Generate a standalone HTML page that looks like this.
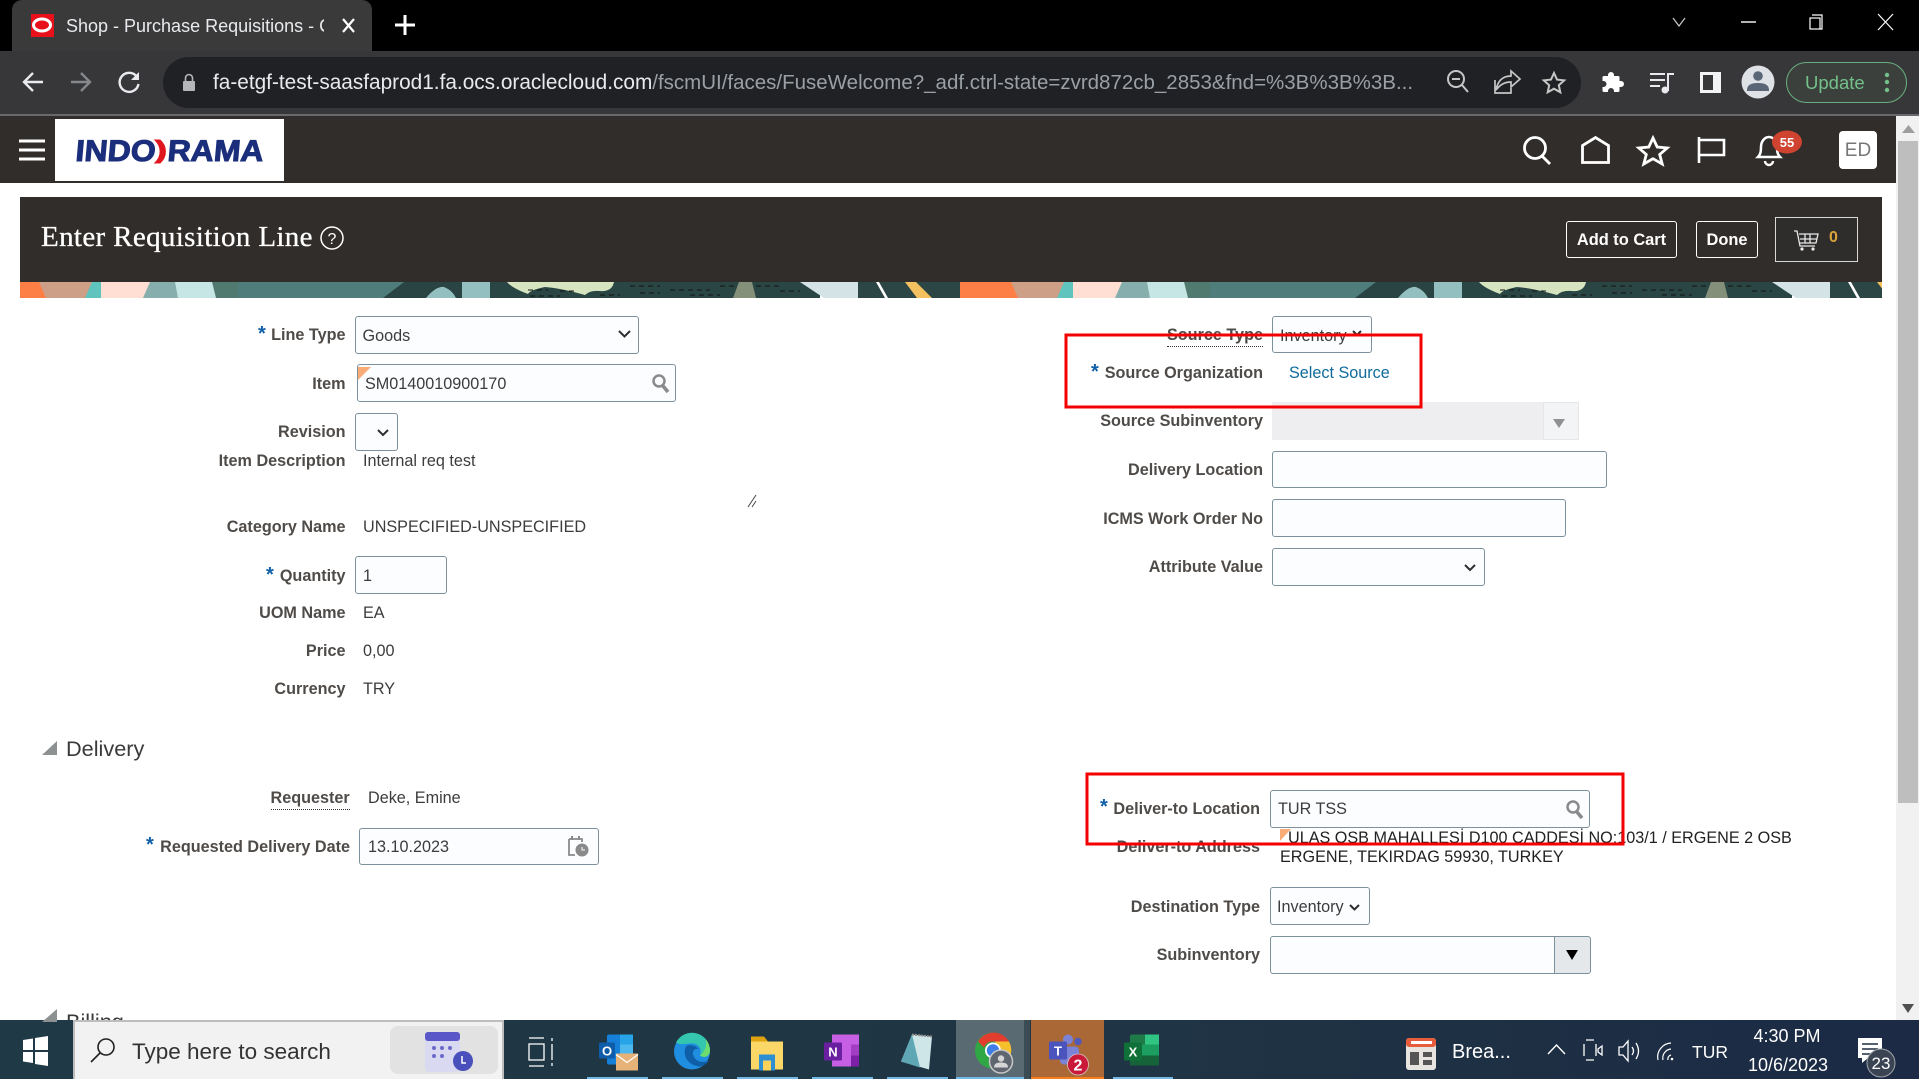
<!DOCTYPE html>
<html><head><meta charset="utf-8"><title>Shop - Purchase Requisitions</title>
<style>
html,body{margin:0;padding:0;width:1919px;height:1079px;overflow:hidden;background:#fff;font-family:"Liberation Sans",Arial,sans-serif}
.a{position:absolute;white-space:nowrap}
.l{position:absolute;white-space:nowrap;font-weight:bold;font-size:16.2px;line-height:20px;color:#4f4b48;text-align:right;margin-top:1px}
.v{position:absolute;white-space:nowrap;font-size:16.2px;line-height:20px;color:#3c3c3c;margin-top:1px}
.s{position:absolute;color:#0f5fa8;font-weight:bold;font-size:20px;line-height:20px;margin-top:-1px}
.b{position:absolute;box-sizing:border-box;border:1px solid #7d919c;border-radius:3px;background:#fbfdff}
.d{border-bottom:1px dotted #333;padding-bottom:1px}
svg{position:absolute;left:0;top:0}
</style></head><body>

<!-- chrome -->
<div class="a" style="left:0;top:0;width:1919px;height:51px;background:#000"></div>
<div class="a" style="left:12px;top:0;width:360px;height:51px;background:#3a3a3b;border-radius:10px 10px 0 0"></div>
<div class="a" style="left:0;top:51px;width:1919px;height:63px;background:#37373a"></div>
<div class="a" style="left:0;top:114px;width:1919px;height:2px;background:#67696c"></div>
<div class="a" style="left:163px;top:57px;width:1418px;height:51px;background:#202124;border-radius:26px"></div>
<div class="a" style="left:66px;top:14px;width:258px;height:24px;line-height:24px;font-size:18px;color:#e8eaed;overflow:hidden">Shop - Purchase Requisitions - C</div>
<div class="a" style="left:213px;top:69px;height:28px;line-height:28px;font-size:20.8px;color:#e8eaed;transform-origin:0 50%">fa-etgf-test-saasfaprod1.fa.ocs.oraclecloud.com<span style="color:#9aa0a6;font-size:20.5px">/fscmUI/faces/FuseWelcome?_adf.ctrl-state=zvrd872cb_2853&amp;fnd=%3B%3B%3B...</span></div>
<div class="a" style="left:1786px;top:62px;width:121px;height:41px;box-sizing:border-box;border:1.5px solid #6aae7e;border-radius:21px;background:#3b403d"></div>
<div class="a" style="left:1805px;top:71px;line-height:24px;font-size:18.5px;color:#74c08a">Update</div>

<!-- oracle header -->
<div class="a" style="left:0;top:116px;width:1896px;height:67px;background:#312d2a"></div>
<div class="a" style="left:55px;top:119px;width:229px;height:62px;background:#fff"></div>
<div class="a" style="left:20px;top:197px;width:1862px;height:85px;background:#312d2a"></div>
<div class="a" style="left:41px;top:220px;font-family:'Liberation Serif',serif;font-size:29px;letter-spacing:.35px;-webkit-text-stroke:.3px #fff;line-height:34px;color:#fff">Enter Requisition Line</div>
<div class="a" style="left:1566px;top:221px;width:111px;height:37px;box-sizing:border-box;border:1px solid #fff;border-radius:3px;color:#fff;font-weight:bold;font-size:16.4px;line-height:36px;text-align:center">Add to Cart</div>
<div class="a" style="left:1696px;top:221px;width:62px;height:37px;box-sizing:border-box;border:1px solid #fff;border-radius:3px;color:#fff;font-weight:bold;font-size:16.4px;line-height:36px;text-align:center">Done</div>
<div class="a" style="left:1775px;top:217px;width:83px;height:45px;box-sizing:border-box;border:1px solid #d8d8d8;background:#2f2d2c"></div>
<div class="a" style="left:1829px;top:227px;font-size:16px;font-weight:bold;line-height:22px;color:#dca23c">0</div>

<!-- banner -->
<svg width="1919" height="1079" style="z-index:0">
<defs>
<g id="bn">
<rect x="-12" y="0" width="58" height="16" fill="#fe7f45"/>
<polygon points="39,0 101,0 86,16 46,16" fill="#cc9f86"/>
<polygon points="92,0 101,0 101,16 85,16" fill="#5fc4bd"/>
<polygon points="101,0 150,0 144,16 101,16" fill="#ffdfd3"/>
<polygon points="150,0 176,0 178,16 143,16" fill="#85aeac"/>
<polygon points="175,0 212,0 216,16 178,16" fill="#c6e5e5"/>
<polygon points="212,0 238,0 250,16 216,16" fill="#507a6f"/>
<rect x="238" y="0" width="170" height="16" fill="#4f7d7b"/>
<polygon points="383,16 404,0 545,0 545,16" fill="#294442"/>
<path d="M426 16Q436 4 444 5Q452 8 456 16Z" fill="#93bfc0"/>
<rect x="462" y="0" width="28" height="16" fill="#93bfc0"/>
<rect x="490" y="0" width="330" height="16" fill="#2a4644"/>
<path d="M507 0H614Q612 10 600 9Q590 8 585 13Q560 6 545 5Q530 8 528 12Q512 6 507 0Z" fill="#d6e5c0"/>
<path d="M528 8h20M560 9h16M630 4h30M670 8h40M640 11h20M690 13h30M530 14h30M600 13h20M720 4h60M780 9h20" stroke="#111" stroke-width="1" stroke-dasharray="5 4"/>
<polygon points="739,0 752,0 756,16 733,16" fill="#84907a"/>
<polygon points="800,0 858,0 858,16 824,16" fill="#d3e3e6"/>
<rect x="858" y="0" width="112" height="16" fill="#2b4644"/>
<polygon points="876,0 879,0 888,16 885,16" fill="#fff"/>
<polygon points="905,0 916,0 932,16 917,16" fill="#f4c160"/>
</g>
<clipPath id="bc"><rect x="20" y="282" width="1862" height="16"/></clipPath>
</defs>
<g clip-path="url(#bc)">
<use href="#bn" x="0" y="282"/><use href="#bn" x="972" y="282"/><use href="#bn" x="1944" y="282"/>
</g>
</svg>

<!-- left form -->
<div class="s" style="left:258px;top:325px">*</div>
<div class="l" style="left:0;width:345.5px;top:324px">Line Type</div>
<div class="b" style="left:355px;top:316px;width:284px;height:38px"></div>
<div class="v" style="left:362.500px;top:325px">Goods</div>
<div class="l" style="left:0;width:345.5px;top:373px">Item</div>
<div class="b" style="left:357px;top:364px;width:319px;height:38px"></div>
<div class="v" style="left:365px;top:373px">SM0140010900170</div>
<div class="l" style="left:0;width:345.5px;top:421px">Revision</div>
<div class="b" style="left:355px;top:413px;width:43px;height:38px"></div>
<div class="l" style="left:0;width:345.5px;top:450px">Item Description</div>
<div class="v" style="left:363px;top:450px">Internal req test</div>
<div class="l" style="left:0;width:345.5px;top:516px">Category Name</div>
<div class="v" style="left:363px;top:516px">UNSPECIFIED-UNSPECIFIED</div>
<div class="s" style="left:266px;top:566px">*</div>
<div class="l" style="left:0;width:345.5px;top:565px">Quantity</div>
<div class="b" style="left:355px;top:556px;width:92px;height:38px"></div>
<div class="v" style="left:363px;top:565px">1</div>
<div class="l" style="left:0;width:345.5px;top:602px">UOM Name</div>
<div class="v" style="left:363px;top:602px">EA</div>
<div class="l" style="left:0;width:345.5px;top:640px">Price</div>
<div class="v" style="left:363px;top:640px">0,00</div>
<div class="l" style="left:0;width:345.5px;top:678px">Currency</div>
<div class="v" style="left:363px;top:678px">TRY</div>

<div class="a" style="left:66px;top:736px;font-size:21.7px;line-height:26px;color:#3a3a3a">Delivery</div>
<div class="l d" style="left:270.500px;top:787px">Requester</div>
<div class="v" style="left:368px;top:787px">Deke, Emine</div>
<div class="s" style="left:146px;top:836px">*</div>
<div class="l" style="left:0;width:350px;top:836px">Requested Delivery Date</div>
<div class="b" style="left:359px;top:828px;width:240px;height:37px"></div>
<div class="v" style="left:368px;top:836px">13.10.2023</div>
<div class="a" style="left:66px;top:1009px;font-size:21.7px;line-height:26px;color:#3a3a3a">Billing</div>

<!-- right form -->
<div class="l d" style="left:1167px;top:324px">Source Type</div>
<div class="b" style="left:1272px;top:316px;width:100px;height:37px"></div>
<div class="v" style="left:1280px;top:325px">Inventory</div>
<div class="s" style="left:1091px;top:363px">*</div>
<div class="l" style="left:1000px;width:263px;top:362px">Source Organization</div>
<div class="v" style="left:1289px;top:362px;color:#0f6b9c">Select Source</div>
<div class="l" style="left:1000px;width:263px;top:410px">Source Subinventory</div>
<div class="a" style="left:1272px;top:402px;width:271px;height:38px;background:#eeeef0"></div>
<div class="a" style="left:1543px;top:402px;width:36px;height:38px;box-sizing:border-box;background:#f3f4f5;border:1px solid #e4e6e8"></div>
<div class="l" style="left:1000px;width:263px;top:459px">Delivery Location</div>
<div class="b" style="left:1272px;top:451px;width:335px;height:37px"></div>
<div class="l" style="left:1000px;width:263px;top:508px">ICMS Work Order No</div>
<div class="b" style="left:1272px;top:499px;width:294px;height:38px"></div>
<div class="l" style="left:1000px;width:263px;top:556px">Attribute Value</div>
<div class="b" style="left:1272px;top:548px;width:213px;height:38px"></div>

<div class="s" style="left:1100px;top:798px">*</div>
<div class="l" style="left:1000px;width:260px;top:798px">Deliver-to Location</div>
<div class="b" style="left:1270px;top:790px;width:320px;height:38px"></div>
<div class="v" style="left:1278px;top:798px">TUR TSS</div>
<div class="l" style="left:1000px;width:260px;top:836px">Deliver-to Address</div>
<div class="v" style="left:1288px;top:827px;color:#222">ULAS OSB MAHALLESİ D100 CADDESİ NO:103/1 / ERGENE 2 OSB</div>
<div class="v" style="left:1280px;top:846px;color:#222">ERGENE, TEKIRDAG 59930, TURKEY</div>
<div class="l" style="left:1000px;width:260px;top:896px">Destination Type</div>
<div class="b" style="left:1270px;top:887px;width:100px;height:38px"></div>
<div class="v" style="left:1277px;top:896px">Inventory</div>
<div class="l" style="left:1000px;width:260px;top:944px">Subinventory</div>
<div class="b" style="left:1270px;top:936px;width:285px;height:38px;border-radius:3px 0 0 3px"></div>
<div class="a" style="left:1554px;top:936px;width:37px;height:38px;box-sizing:border-box;background:#e4e8ea;border:1px solid #7d919c;border-radius:0 3px 3px 0"></div>

<!-- scrollbar -->
<div class="a" style="left:1896px;top:116px;width:23px;height:904px;background:#f1f1f1"></div>
<div class="a" style="left:1898px;top:141px;width:20px;height:662px;background:#bebebe"></div>

<!-- taskbar -->
<div class="a" style="left:0;top:1020px;width:1919px;height:59px;background:linear-gradient(90deg,#1f3a46,#1f3444 60%,#1c2a45)"></div>
<div class="a" style="left:73px;top:1020px;width:431px;height:59px;box-sizing:border-box;background:#f2f2f2;border:2px solid #bdbdbd;border-bottom:none"></div>
<div class="a" style="left:390px;top:1026px;width:108px;height:48px;background:#e2e2e2;border-radius:8px"></div>
<div class="a" style="left:132px;top:1038px;font-size:22.5px;line-height:28px;color:#333">Type here to search</div>
<div class="a" style="left:956px;top:1020px;width:68px;height:59px;background:#5a6a72"></div>
<div class="a" style="left:1024px;top:1020px;width:6px;height:59px;background:#3b4c55"></div>
<div class="a" style="left:1031px;top:1020px;width:73px;height:59px;background:#a96836"></div>
<div class="a" style="left:1452px;top:1038px;font-size:20px;line-height:28px;color:#fff">Brea...</div>
<div class="a" style="left:1692px;top:1038px;font-size:17.5px;line-height:28px;color:#fff">TUR</div>
<div class="a" style="left:1737px;top:1023px;width:100px;text-align:center;font-size:18px;line-height:26px;color:#fff">4:30 PM</div>
<div class="a" style="left:1737px;top:1052px;width:102px;text-align:center;font-size:18px;line-height:26px;color:#fff">10/6/2023</div>

<svg width="1919" height="1079" style="z-index:5">
<!-- tab -->
<rect x="31" y="14" width="23" height="23" fill="#e8101a"/><ellipse cx="42" cy="25" rx="8.5" ry="6" fill="none" stroke="#fff" stroke-width="3"/>
<path d="M343 19l11 13M354 19l-11 13" stroke="#fff" stroke-width="2.2"/>
<path d="M405 15v20M395 25h20" stroke="#fff" stroke-width="3"/>
<!-- window controls -->
<path d="M1673 18l6 8 6-8" fill="none" stroke="#ccc" stroke-width="1.2"/>
<path d="M1741 22h15" stroke="#fff" stroke-width="1.4"/>
<path d="M1812 15h10v14h-2" fill="none" stroke="#fff" stroke-width="1.2"/><rect x="1810" y="18" width="10" height="11" fill="#000" stroke="#fff" stroke-width="1.2"/>
<path d="M1878 14l15 16M1893 14l-15 16" stroke="#fff" stroke-width="1.2"/>
<!-- nav -->
<path d="M43 82H25M33 73l-9 9 9 9" fill="none" stroke="#e8eaed" stroke-width="2.4"/>
<path d="M72 82H90M82 73l9 9-9 9" fill="none" stroke="#85878a" stroke-width="2.4" transform="translate(-1 0)"/>
<path d="M137 77a9.5 9.5 0 1 0 1.5 7" fill="none" stroke="#e8eaed" stroke-width="2.4"/><path d="M139 72v8h-8z" fill="#e8eaed"/>
<rect x="183" y="81" width="12" height="10" rx="1" fill="#b4b6b9"/><path d="M185.5 81v-3a3.5 3.5 0 0 1 7 0v3" fill="none" stroke="#b4b6b9" stroke-width="1.6"/>
<!-- omnibox icons -->
<circle cx="1456" cy="79" r="8" fill="none" stroke="#c4c7c5" stroke-width="2"/><path d="M1452 79h8M1462 85l6 7" stroke="#c4c7c5" stroke-width="2"/>
<path d="M1495 80v13h16v-5M1496 90c2-10 7-14 15-14v-5l9 8-9 8v-5c-7 0-11 3-15 8z" fill="none" stroke="#c4c7c5" stroke-width="1.7"/>
<path d="M1554 73l3 6.6 7.2.8-5.4 4.8 1.5 7.1-6.3-3.6-6.3 3.6 1.5-7.1-5.4-4.8 7.200-.8z" fill="none" stroke="#c4c7c5" stroke-width="2"/>
<path d="M1604 76h4v-1a3 3 0 0 1 6 0v1h4a1.500 1.500 0 0 1 1.500 1.500v3.500h1.500a3 3 0 0 1 0 6h-1.500v3.500a1.500 1.500 0 0 1-1.500 1.500h-4v-1a3 3 0 0 0-6 0v1h-4a1.500 1.500 0 0 1-1.500-1.500v-3.500h1a3 3 0 0 0 0-6h-1v-3.500a1.500 1.500 0 0 1 1.500-1.500z" fill="#fff"/>
<path d="M1650 74h15M1650 80h15M1650 86h10" stroke="#e8eaed" stroke-width="2"/><path d="M1668 91v-17h6" fill="none" stroke="#e8eaed" stroke-width="2"/><circle cx="1665" cy="90" r="3.500" fill="#e8eaed"/>
<rect x="1700" y="72" width="21" height="21" fill="#f1f3f4"/><rect x="1703" y="75" width="10" height="15" fill="#37373a"/>
<circle cx="1758" cy="82" r="16.500" fill="#dee1e6"/><circle cx="1758" cy="76" r="4.800" fill="#5a6577"/><path d="M1747 90c0-5 4-7 11-7s11 2 11 7v1h-22z" fill="#5a6577"/>
<g fill="#74c08a"><circle cx="1887" cy="75" r="2.200"/><circle cx="1887" cy="82" r="2.200"/><circle cx="1887" cy="90" r="2.200"/></g>
<!-- oracle header -->
<path d="M19 141h26M19 150h26M19 159h26" stroke="#fff" stroke-width="3"/>
<text x="75" y="161" font-family="Liberation Sans,sans-serif" font-weight="bold" font-size="30" fill="#1b2e7c" stroke="#1b2e7c" stroke-width="1" textLength="80" lengthAdjust="spacingAndGlyphs" transform="translate(14 0) skewX(-5)">INDO</text>
<text x="155" y="158" font-family="Liberation Sans,sans-serif" font-weight="bold" font-size="25" fill="#e0171f" stroke="#e0171f" stroke-width="1" textLength="12" lengthAdjust="spacingAndGlyphs">)</text>
<text x="167" y="161" font-family="Liberation Sans,sans-serif" font-weight="bold" font-size="30" fill="#1b2e7c" stroke="#1b2e7c" stroke-width="1" textLength="96" lengthAdjust="spacingAndGlyphs" transform="translate(14 0) skewX(-5)">RAMA</text>
<circle cx="1535" cy="148" r="10.500" fill="none" stroke="#fff" stroke-width="2.800"/><path d="M1542 156l8 8" stroke="#fff" stroke-width="2.800"/>
<path d="M1582.500 162.500V145.500L1595.500 137.500 1608.500 145.500V162.500Z" fill="none" stroke="#fff" stroke-width="2.800"/>
<path d="M1653 138l4.200 9 10 1-7.500 6.500 2.500 9.500-9.200-5.300-9.200 5.300 2.500-9.500-7.500-6.500 10-1z" fill="none" stroke="#fff" stroke-width="2.800" stroke-linejoin="miter"/>
<path d="M1699 163v-26M1699 140h25v15h-25" fill="none" stroke="#fff" stroke-width="2.600"/>
<path d="M1758 157c3-3 3-7 3-10 0-6 4-10 8-10s8 4 8 10c0 3 0 7 3 10z" fill="none" stroke="#fff" stroke-width="2.500"/><path d="M1765 161a4 4 0 0 0 8 0" fill="none" stroke="#fff" stroke-width="2.400"/>
<ellipse cx="1787" cy="142" rx="15" ry="11.500" fill="#cf4330"/>
<text x="1787" y="147" text-anchor="middle" font-family="Liberation Sans,sans-serif" font-weight="bold" font-size="13" fill="#fff">55</text>
<rect x="1839" y="131" width="38" height="38" rx="4" fill="#fff"/>
<text x="1858" y="156" text-anchor="middle" font-family="Liberation Sans,sans-serif" font-size="19" fill="#777">ED</text>
<circle cx="332" cy="238" r="11" fill="none" stroke="#fff" stroke-width="1.500"/>
<text x="332" y="244" text-anchor="middle" font-family="Liberation Sans,sans-serif" font-size="16" fill="#fff">?</text>
<!-- cart -->
<path d="M1794 231h3l3 15h15M1799 234h19l-2 9h-16M1805 234v9M1810 234v9M1800 239h17" fill="none" stroke="#e8e8e8" stroke-width="1.300"/><circle cx="1802" cy="249" r="1.600" fill="#eee"/><circle cx="1813" cy="249" r="1.600" fill="#eee"/>
<!-- scrollbar arrows -->
<path d="M1902 133l6.500-8 6.500 8z" fill="#9e9e9e"/><path d="M1902 1004l6 9 6-9z" fill="#505050"/>
<!-- chevrons -->
<g fill="none" stroke="#2e2e2e" stroke-width="2"><path d="M619 331l5.500 5.500 5.500-5.500"/><path d="M378 430l5 5 5-5"/><path d="M1353 331l4 4 4-4"/><path d="M1465 565l5 5 5-5"/><path d="M1350 905l4.500 4.500 4.500-4.500"/></g>
<path d="M1553 419h12l-6 9z" fill="#919191"/>
<path d="M1566 950h12l-6 10z" fill="#000"/>
<!-- magnifiers -->
<g fill="none" stroke="#8a8a8a"><circle cx="659" cy="381" r="5.500" stroke-width="2.500"/><path d="M663 386l5 6" stroke-width="3.600"/><circle cx="1573" cy="807" r="5.500" stroke-width="2.500"/><path d="M1577 812l5 6" stroke-width="3.600"/></g>
<!-- triangles -->
<path d="M358 367h13l-13 13z" fill="#f9ac76"/><path d="M1280 829h11l-11 12z" fill="#f9ac76"/>
<path d="M748 507l8-12M752 507l4-6" stroke="#444" stroke-width="1"/>
<path d="M42 755l15-14v14z" fill="#8d9192"/><path d="M42 1022l15-13v13z" fill="#8d9192"/>
<!-- calendar -->
<path d="M569 839h13v3M569 839v16h6" fill="none" stroke="#8a8a8a" stroke-width="1.800"/><path d="M572 836v4M579 836v4" stroke="#8a8a8a" stroke-width="2"/><circle cx="582" cy="850" r="6.500" fill="#8a8a8a"/><path d="M582 847v3h3" stroke="#fff" stroke-width="1" fill="none"/>
<!-- red rects -->
<g fill="none" stroke="#f40000" stroke-width="3"><rect x="1066" y="335" width="355" height="72"/><rect x="1087" y="774" width="536" height="70"/></g>
<!-- taskbar icons -->
<g transform="translate(-1 -1)"><path d="M24 1041l10-1.500v11.500h-10zM36 1039l13-2v14h-13zM24 1053h10v11l-10-1.500zM36 1053h13v14l-13-2z" fill="#fff"/></g>
<circle cx="106" cy="1047" r="8" fill="none" stroke="#222" stroke-width="1.600"/><path d="M100 1053l-9 9" stroke="#222" stroke-width="1.600"/>
<rect x="425" y="1032" width="35" height="40" rx="4" fill="#d9d9f2"/><rect x="425" y="1032" width="35" height="9" rx="3" fill="#5a57c8"/><g fill="#6d6ac9"><circle cx="434" cy="1048" r="2"/><circle cx="442" cy="1048" r="2"/><circle cx="450" cy="1048" r="2"/><circle cx="434" cy="1056" r="2"/><circle cx="442" cy="1056" r="2"/></g><circle cx="463" cy="1061" r="10" fill="#4a50bb"/><path d="M462 1056v7h4" stroke="#fff" stroke-width="1.500" fill="none"/>
<path d="M529 1038h15M529 1044h15v16h-15zM529 1066h15M552 1038v3M552 1044v16M552 1063v3" fill="none" stroke="#fff" stroke-width="1.300"/>
<g transform="translate(0 -1.500)">
<!-- outlook -->
<rect x="607" y="1036" width="26" height="30" rx="2" fill="#1680d8"/><rect x="620" y="1036" width="13" height="10" fill="#27a3e8"/><rect x="620" y="1046" width="13" height="10" fill="#4db8ee"/><rect x="599" y="1044" width="16" height="16" rx="1.500" fill="#0f5cab"/><text x="607" y="1057" text-anchor="middle" font-family="Liberation Sans,sans-serif" font-weight="bold" font-size="13" fill="#fff">O</text><rect x="616" y="1055" width="22" height="17" fill="#e6b277"/><path d="M616 1056l11 8 11-8" fill="none" stroke="#fff" stroke-width="1.300"/>
<!-- edge -->
<circle cx="692" cy="1053" r="18" fill="#1f8ee0"/><path d="M676 1044a18 18 0 0 1 34 8c0 6-6 8-10 5 3-9-4-13-10-12-6 0-10 2-14-1z" fill="#35c6b0"/><path d="M710 1052a18 18 0 0 0-5-12c3 6 0 13-5 17 4 3 10 1 10-5z" fill="#6fdc6e"/><path d="M686 1048c-4 8 1 19 14 20 4-1 7-3 9-6-7 3-14 1-16-6-1-5 4-7 6-5-3-4-10-6-13-3z" fill="#0f5fa8"/>
<!-- folder -->
<path d="M751 1040h12l2 3h18v28h-32z" fill="#fbd768"/><path d="M751 1038h13l4 5h-17z" fill="#dea30e"/><rect x="759" y="1056" width="16" height="16" fill="#2e8fd3"/><rect x="763" y="1062" width="8" height="10" fill="#fbd25a"/>
<!-- onenote -->
<rect x="832" y="1036" width="27" height="32" fill="#c65fe3"/><rect x="851" y="1046" width="8" height="11" fill="#a23dc4"/><rect x="851" y="1057" width="8" height="11" fill="#7e1fa8"/><rect x="824" y="1044" width="18" height="18" rx="1.500" fill="#6a1fa0"/><text x="833" y="1058" text-anchor="middle" font-family="Liberation Sans,sans-serif" font-weight="bold" font-size="13" fill="#fff">N</text>
<!-- notepad -->
<path d="M912 1036l20 2-3 33-28-8z" fill="#cfe6e8"/><path d="M912 1036l8 33-19-6z" fill="#5fa7b4"/><path d="M912 1036l20 2" stroke="#888" stroke-width="2" stroke-dasharray="2 1"/>
<!-- chrome -->
<circle cx="993" cy="1052" r="18" fill="#2fa745"/><path d="M978 1043a18 18 0 0 1 31 0h-16a9 9 0 0 0-9 6z" fill="#e23d2f"/><path d="M1009 1043a18 18 0 0 1-8 25l-8-13a9 9 0 0 0 2-12z" fill="#f6c02c"/><circle cx="993" cy="1052" r="8" fill="#fff"/><circle cx="993" cy="1052" r="6.200" fill="#3d7fe6"/>
<circle cx="1001" cy="1063" r="11.500" fill="#5f6670" stroke="#c8c8c8" stroke-width="1.500"/><circle cx="1001" cy="1060" r="3.200" fill="#d5d5d5"/><path d="M994 1069c0-4 3-5 7-5s7 1 7 5z" fill="#d5d5d5"/>
<!-- teams -->
<circle cx="1068" cy="1041" r="5" fill="#7b83d6"/><circle cx="1078" cy="1043" r="3.800" fill="#5059b8"/><rect x="1060" y="1048" width="19" height="18" rx="4" fill="#7b83d6"/><rect x="1049" y="1043" width="18" height="18" rx="1.500" fill="#4b53bc"/><text x="1058" y="1057" text-anchor="middle" font-family="Liberation Sans,sans-serif" font-weight="bold" font-size="13" fill="#fff">T</text><circle cx="1078" cy="1066" r="10.500" fill="#c91a3a" stroke="#d8c4c4" stroke-width="0.800"/><text x="1078" y="1072" text-anchor="middle" font-family="Liberation Sans,sans-serif" font-weight="bold" font-size="16" fill="#fff">2</text>
<!-- excel -->
<rect x="1130" y="1036" width="29" height="31" rx="2" fill="#1e7a47"/><rect x="1145" y="1036" width="14" height="10" fill="#31c583"/><rect x="1130" y="1046" width="29" height="11" fill="#1b9e5f"/><rect x="1130" y="1057" width="29" height="10" fill="#166239"/><rect x="1124" y="1044" width="18" height="18" rx="1.500" fill="#0f7137"/><text x="1133" y="1058" text-anchor="middle" font-family="Liberation Sans,sans-serif" font-weight="bold" font-size="13" fill="#fff">X</text>
</g>
<!-- underlines -->
<g fill="#74b8e6"><rect x="587" y="1077" width="61" height="2"/><rect x="662" y="1077" width="61" height="2"/><rect x="737" y="1077" width="61" height="2"/><rect x="812" y="1077" width="61" height="2"/><rect x="887" y="1077" width="61" height="2"/><rect x="956" y="1077" width="68" height="2"/><rect x="1113" y="1077" width="60" height="2"/></g>
<rect x="1031" y="1077" width="73" height="2" fill="#f77f1e"/>
<!-- tray -->
<rect x="1406" y="1038" width="30" height="32" rx="3" fill="#e8e4df"/><rect x="1406" y="1038" width="30" height="9" rx="3" fill="#e75d3b"/><rect x="1411" y="1041" width="21" height="3" fill="#fff"/><rect x="1410" y="1052" width="9" height="13" fill="#555"/><rect x="1423" y="1052" width="9" height="5" fill="#555"/><rect x="1423" y="1060" width="9" height="5" fill="#555"/>
<path d="M1548 1054l8.500-9 8.500 9" fill="none" stroke="#fff" stroke-width="1.400"/>
<path d="M1586 1040h8M1586 1060h8M1584 1044v12M1596 1044v12M1598 1049l4-3v9l-4-3z" fill="none" stroke="#fff" stroke-width="1.300"/>
<path d="M1619 1047h4l5-6v20l-5-6h-4zM1632 1047q3 4 0 8M1636 1043q5 8 0 16" fill="none" stroke="#fff" stroke-width="1.300"/>
<path d="M1658 1060a14 14 0 0 1 13-17M1663 1060a9 9 0 0 1 8-11M1668 1060a4 4 0 0 1 3-5" fill="none" stroke="#fff" stroke-width="1.200"/><circle cx="1672" cy="1059" r="1.300" fill="#fff"/>
<path d="M1858 1038h24v20h-14l-6 5v-5h-4z" fill="#fff"/><path d="M1862 1044h16M1862 1049h16M1862 1054h12" stroke="#1d2c42" stroke-width="1.400"/>
<circle cx="1881" cy="1063" r="14" fill="#3a4452" stroke="#9fa4aa" stroke-width="1"/>
<text x="1881" y="1069" text-anchor="middle" font-family="Liberation Sans,sans-serif" font-size="17" fill="#fff">23</text>
</svg>
</body></html>
